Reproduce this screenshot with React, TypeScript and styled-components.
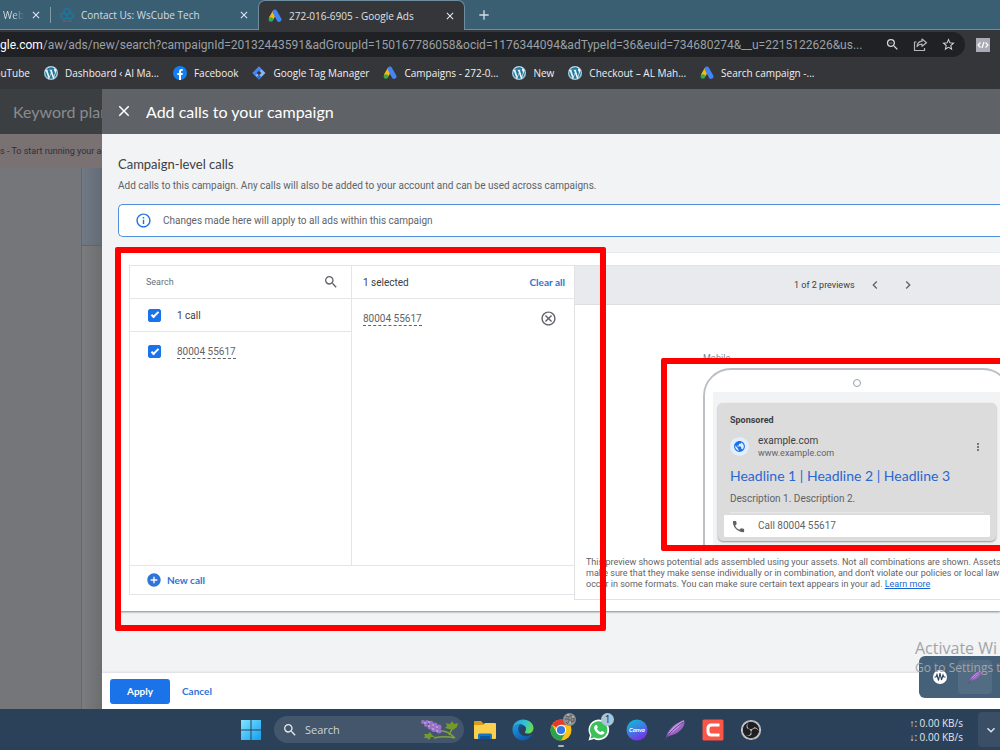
import React from "react";
import styled, { createGlobalStyle } from "styled-components";
import {
  MdAdd, MdAddCircle, MdChevronLeft, MdChevronRight, MdClose, MdExpandMore, MdMoreVert,
  MdOutlineCancel, MdOutlineInfo, MdPhone, MdPublic, MdSearch, MdStarBorder, MdZoomOut,
} from "react-icons/md";
import { FaWordpress } from "react-icons/fa";
import { SiObsstudio } from "react-icons/si";

const ui = `"Open Sans", "Noto Sans", sans-serif`;
const body = `Roboto, sans-serif`;
const display = `Lato, "Open Sans", sans-serif`;

const GlobalStyle = createGlobalStyle`
  *, *::before, *::after { box-sizing: border-box; }
  body { margin: 0; overflow: hidden; font-family: ${body}; color: #3c4043; }
  button, input { font: inherit; color: inherit; border: 0; padding: 0; margin: 0; background: none; }
  button { display: inline-flex; align-items: center; justify-content: center; cursor: pointer; }
  a { color: inherit; text-decoration: none; }
  svg { display: block; flex: none; }
  h1, h2, p { margin: 0; font-weight: 400; }
`;

const Screen = styled.div`
  position: relative;
  display: flex;
  flex-direction: column;
  height: 100vh;
  overflow: hidden;
  white-space: nowrap;
`;

/* Browser window */
const TabStrip = styled.header`
  display: flex;
  align-items: stretch;
  height: 30px;
  background: #3a5f73;
  border-bottom: 1px solid #6e8ea0;
  font: 10px ${ui};
  color: #d3dde3;
`;
const Tab = styled.div<{ $width: number; $active?: boolean }>`
  display: flex;
  align-items: center;
  gap: 7px;
  width: ${(p) => p.$width}px;
  padding: 0 8px 0 9px;
  ${(p) => p.$active && `
    background: #35363a;
    border: 1px solid #6e8ea0;
    border-bottom: 0;
    border-radius: 7px 7px 0 0;
    margin-bottom: -1px;
    color: #dfe1e4;
  `}
`;
const TabTitle = styled.span`
  flex: 1;
  overflow: hidden;
`;
const CutTab = styled(Tab)`
  padding: 0;
  gap: 6px;
`;
const CutTitle = styled.span`
  display: flex;
  justify-content: flex-end;
  width: 24px;
  overflow: hidden;
  mask-image: linear-gradient(90deg, #000 55%, transparent);
`;
const TabDivider = styled.i`
  width: 1px;
  margin: 7px 0 6px;
  background: #7f9aa8;
`;
const NewTab = styled.button`
  width: 38px;
`;
const AddressRow = styled.div`
  display: flex;
  align-items: center;
  gap: 11px;
  height: 29px;
  padding-right: 10px;
  background: #35363a;
`;
const AddressBar = styled.div`
  display: flex;
  align-items: center;
  flex: 1;
  gap: 13px;
  height: 25px;
  padding-right: 9px;
  border-radius: 0 13px 13px 0;
  background: #202124;
  color: #d5d7da;
  min-width: 0;
`;
const Url = styled.div`
  flex: 1;
  overflow: hidden;
  font: 12px ${body};
  color: #9aa0a6;
  b { font-weight: 400; color: #fff; }
`;
const Bookmarks = styled.nav`
  display: flex;
  align-items: center;
  gap: 14px;
  height: 30px;
  padding-bottom: 2px;
  background: #35363a;
  font: 10px ${ui};
  color: #f0f1f2;
`;
const Bookmark = styled.a`
  display: flex;
  align-items: center;
  gap: 7px;
`;
const CutBookmark = styled.a`
  display: flex;
  justify-content: flex-end;
  width: 30px;
  overflow: hidden;
`;

/* Page */
const Page = styled.main`
  display: flex;
  flex: 1;
  min-height: 0;
`;
const Backdrop = styled.aside`
  display: flex;
  flex-direction: column;
  width: 102px;
  flex: none;
  overflow: hidden;
  background: #747679;
`;
const BackTitle = styled.div`
  display: flex;
  align-items: center;
  height: 45px;
  background: #3c3f42;
  color: #898c8f;
  font: 16px ${display};
  &::before {
    content: "";
    width: 1px;
    height: 20px;
    margin: 0 12px 0 1px;
    background: #575a5d;
  }
`;
const BackNotice = styled.div`
  height: 34px;
  background: #7a7172;
  color: #2f3032;
  font-size: 9px;
  line-height: 34px;
`;
const BackCard = styled.div`
  flex: 1;
  margin-left: 81px;
  border-left: 1px solid #65676a;
  background: linear-gradient(90deg, #7b7c7e, #6c6d6f);
  &::before {
    content: "";
    display: block;
    height: 78px;
    background: linear-gradient(90deg, #717985, #636b77);
    border-bottom: 1px solid #5d6570;
  }
`;
const Panel = styled.section`
  display: flex;
  flex-direction: column;
  flex: 1;
  min-width: 0;
  background: #f1f3f4;
  overflow: hidden;
`;
const PanelHeader = styled.header`
  display: flex;
  align-items: center;
  gap: 13px;
  height: 45px;
  padding: 0 0 1px 13px;
  background: #5f6368;
  color: #fff;
  h1 { font: 16px ${display}; }
`;
const PanelBody = styled.div`
  flex: 1;
  min-height: 0;
  padding: 21px 0 0 16px;
`;
const SectionTitle = styled.h2`
  font: 13px/18px ${display};
  color: #3c4043;
`;
const Lead = styled.p`
  margin-top: 4px;
  font-size: 10px;
  line-height: 18px;
  color: #5f6368;
`;
const Notice = styled.div`
  display: flex;
  align-items: center;
  gap: 11px;
  height: 33px;
  margin: 9px 0 16px;
  padding: 0 0 1px 16px;
  border: 1px solid #4f8fdc;
  border-right: 0;
  border-radius: 5px 0 0 5px;
  background: #fff;
  font-size: 10px;
  color: #5f6368;
  svg { color: #1a73e8; }
`;
const Card = styled.div`
  display: flex;
  align-items: flex-start;
  padding: 12px 0 11px 11px;
  background: #fff;
  box-shadow: 0 1px 2px #80868b;
`;
const Picker = styled.div`
  width: 445px;
  flex: none;
  border: 1px solid #e3e5e8;
  border-right: 0;
`;
const Columns = styled.div`
  display: grid;
  grid-template-columns: 221px 1fr;
  height: 299px;
`;
const Column = styled.div`
  & + & { border-left: 1px solid #e3e5e8; }
`;
const Row = styled.div<{ $height: number; $line?: boolean }>`
  display: flex;
  align-items: center;
  height: ${(p) => p.$height}px;
  padding: 0 9px 0 11px;
  font-size: 10px;
  color: #3c4043;
  border-bottom: ${(p) => (p.$line ? "1px solid #e3e5e8" : "0")};
`;
const SearchField = styled.label`
  display: flex;
  align-items: center;
  flex: 1;
  padding: 0 3px 0 5px;
  color: #5f6368;
  input { flex: 1; min-width: 0; outline: 0; font-size: 9px; }
  input::placeholder { color: #6b6f74; opacity: 1; }
`;
const Check = styled.label`
  display: flex;
  align-items: center;
  gap: 16px;
  padding-left: 7px;
`;
const Tick = styled.input.attrs({ type: "checkbox" })`
  appearance: none;
  display: grid;
  place-items: center;
  width: 13px;
  height: 13px;
  border-radius: 2px;
  border: 1px solid #5f6368;
  &:checked { background: #1a73e8; border-color: #1a73e8; }
  &:checked::after {
    content: "";
    width: 4px;
    height: 8px;
    margin-bottom: 2px;
    border: solid #fff;
    border-width: 0 2px 2px 0;
    transform: rotate(45deg);
  }
`;
const Phone = styled.span`
  border-bottom: 1px dashed #5f6368;
  line-height: 13px;
  color: #5f6368;
`;
const Spacer = styled.span`
  flex: 1;
`;
const TextButton = styled.button`
  gap: 5px;
  font: 700 10px ${display};
  color: #2f74d8;
`;
const IconButton = styled.button<{ $pad?: number }>`
  color: #5f6368;
  padding: 0 ${(p) => p.$pad ?? 0}px;
`;
const PickerFooter = styled.div`
  display: flex;
  align-items: center;
  height: 29px;
  padding-left: 16px;
  border-top: 1px solid #e3e5e8;
`;
const Preview = styled.div`
  flex: 1;
  min-width: 0;
  height: 335px;
  overflow: hidden;
  border: 1px solid #e0e2e5;
  border-right: 0;
`;
const Pager = styled.div`
  display: flex;
  align-items: center;
  gap: 12px;
  height: 39px;
  padding-left: 219px;
  background: #e8eaed;
  border-bottom: 1px solid #dcdee1;
  font-size: 9px;
  color: #3c4043;
`;
const Arrows = styled.div`
  display: flex;
  gap: 17px;
`;
const Stage = styled.div`
  display: flex;
  flex-direction: column;
  width: 308px;
  height: 240px;
  margin-left: 128px;
  padding-top: 47px;
  overflow: hidden;
  font-size: 9px;
  line-height: 12px;
  color: #80868b;
`;
const Handset = styled.div`
  flex: none;
  height: 220px;
  margin-top: 4px;
  padding: 9px 8px 0;
  border: 2px solid #bdc1c6;
  border-radius: 28px 28px 0 0;
  background: #fff;
  &::before {
    content: "";
    display: block;
    width: 8px;
    height: 8px;
    margin: 0 auto 5px;
    border: 1px solid #9aa0a6;
    border-radius: 50%;
  }
`;
const HandsetScreen = styled.div`
  height: 190px;
  padding: 11px 5px;
  background: #f1f3f4;
`;
const Ad = styled.article`
  display: flex;
  flex-direction: column;
  padding: 11px 6px 4px;
  border-radius: 5px;
  background: #dcdcdc;
  box-shadow: 0 1px 2px #00000066;
  color: #5f6368;
  font-size: 10px;
`;
const AdLine = styled.div`
  padding: 0 6px;
`;
const Sponsored = styled(AdLine)`
  font-size: 9px;
  font-weight: 700;
  color: #3c4043;
`;
const Site = styled(AdLine)`
  display: flex;
  align-items: center;
  gap: 9px;
  margin-top: 8px;
  div { flex: 1; font-size: 9px; }
  strong { display: block; font: 10px/13px ${body}; color: #3c4043; }
`;
const Globe = styled.span`
  display: grid;
  place-items: center;
  width: 19px;
  height: 19px;
  border-radius: 50%;
  background: #e3edfb;
  color: #1a73e8;
`;
const Headline = styled(AdLine)`
  margin-top: 8px;
  font: 14px/18px ${display};
  color: #2a66d0;
`;
const Description = styled(AdLine)`
  margin: 8px 0 7px;
`;
const AdRule = styled.hr`
  width: 254px;
  height: 1px;
  margin: 0 6px 2px;
  border: 0;
  background: #e8e8e8;
`;
const CallLink = styled.a`
  display: flex;
  align-items: center;
  gap: 12px;
  height: 22px;
  padding-left: 7px;
  border-radius: 1px;
  background: #fff;
`;
const Disclaimer = styled.p`
  padding: 12px 0 0 11px;
  font-size: 9px;
  line-height: 11px;
  color: #5f6368;
  a { color: #1967d2; text-decoration: underline; }
`;
const PanelFooter = styled.footer`
  display: flex;
  align-items: center;
  gap: 12px;
  height: 36px;
  flex: none;
  padding-left: 8px;
  background: #fff;
  box-shadow: 0 -1px 2px #dadce0;
`;
const Apply = styled(TextButton)`
  width: 60px;
  height: 25px;
  border-radius: 3px;
  background: #1a73e8;
  color: #fff;
`;

/* Overlays */
const Highlight = styled.div<{ $x: number; $y: number; $w: number; $h: number }>`
  position: absolute;
  left: ${(p) => p.$x}px;
  top: ${(p) => p.$y}px;
  width: ${(p) => p.$w}px;
  height: ${(p) => p.$h}px;
  border: 6px solid #fe0000;
  border-radius: 2px;
  pointer-events: none;
`;
const Widget = styled.div`
  position: absolute;
  right: 0;
  bottom: 52px;
  display: flex;
  align-items: center;
  gap: 11px;
  width: 81px;
  height: 42px;
  padding-left: 14px;
  border-radius: 6px 0 0 6px;
  background: #45617a;
`;
const WidgetTile = styled.span`
  display: grid;
  place-items: center;
  width: 34px;
  height: 34px;
  border-radius: 4px;
  background: #526c83;
`;
const Watermark = styled.div`
  position: absolute;
  right: 0;
  bottom: 73px;
  width: 85px;
  font: 12px/18px ${ui};
  color: #a2a5a8;
  strong { display: block; font: 16px/22px ${ui}; }
`;

/* Taskbar */
const Taskbar = styled.footer`
  display: flex;
  align-items: center;
  height: 41px;
  flex: none;
  padding-left: 240px;
  background: #2b4059;
  color: #e4e8ec;
  font: 11px ${ui};
`;
const TaskSearch = styled.label`
  display: flex;
  align-items: center;
  gap: 7px;
  width: 190px;
  height: 27px;
  margin: 0 10px 0 12px;
  padding: 0 4px 0 8px;
  border-radius: 14px;
  background: #43566c;
  input { flex: 1; min-width: 0; outline: 0; }
  input::placeholder { color: #ccd3da; opacity: 1; }
`;
const Apps = styled.div`
  display: flex;
  gap: 16px;
`;
const AppButton = styled.button<{ $open?: boolean }>`
  position: relative;
  width: 22px;
  height: 34px;
  &::after {
    content: "";
    display: ${(p) => (p.$open ? "block" : "none")};
    position: absolute;
    bottom: 0;
    left: 8px;
    width: 6px;
    height: 2px;
    border-radius: 1px;
    background: #aab4be;
  }
`;
const Badge = styled.span<{ $bg: string }>`
  position: absolute;
  top: 0;
  right: -4px;
  width: 13px;
  height: 13px;
  border-radius: 50%;
  background: ${(p) => p.$bg};
  color: #1d2b36;
  font: 10px/13px ${ui};
  text-align: center;
`;
const Meter = styled.div`
  margin-left: auto;
  font: 10px/14px ${ui};
`;
const Tray = styled.button`
  width: 22px;
  height: 35px;
  margin-left: 15px;
  padding-left: 4px;
  border-radius: 4px 0 0 4px;
  background: #3a4e66;
`;

const AdsLogo = () => (
  <svg width="14" height="14" viewBox="0 0 24 24">
    <path d="M8 3.500 1.500 15l7 4L15 7.500Z" fill="#fbbc04" />
    <path d="M8.300 3a4 4 0 0 1 7 0l7.200 13a4 4 0 0 1-7 4L8.300 7a4 4 0 0 1 0-4Z" fill="#4285f4" />
    <circle cx="5" cy="18" r="4" fill="#34a853" />
  </svg>
);
const WordPress = () => (
  <svg width="14" height="14" viewBox="0 0 14 14">
    <circle cx="7" cy="7" r="7" fill="#e8f3f8" />
    <FaWordpress size={14} color="#21759b" />
  </svg>
);
const FacebookLogo = () => (
  <svg width="14" height="14" viewBox="0 0 14 14">
    <circle cx="7" cy="7" r="7" fill="#1180f5" />
    <path d="M6 14V9H4.300V7H6V5.600C6 3.900 7 3 8.500 3l1.300.1v1.700H9c-.8 0-1 .4-1 1V7h1.800l-.3 2H8v5Z" fill="#fff" />
  </svg>
);
const TagManager = () => (
  <svg width="14" height="14" viewBox="0 0 24 24">
    <path d="M12 1 23 12 12 23 1 12Z" fill="#8ab4f8" />
    <path d="M12 1 1 12l4.500 4.500L16.500 5.500Z" fill="#4285f4" />
    <path d="m12 8 4 4-4 4-4-4Z" fill="#35363a" />
    <path d="m12 15 4 4-4 4-4-4Z" fill="#246fdb" />
  </svg>
);
const CubeLogo = () => (
  <svg width="14" height="15" viewBox="0 0 14 15" fill="none" stroke="#147da8" strokeWidth="1.300">
    <path d="M4 3 7 1l3 2v3L7 8 4 6ZM1 7l3-1 3 2v3l-3 1-3-2ZM13 7l-3-1-3 2v3l3 1 3-2Z" />
    <path d="M2 14h10" stroke="#6c5b68" />
  </svg>
);
const ShareIcon = () => (
  <svg width="15" height="15" viewBox="0 0 15 15" fill="none" stroke="#b4b7ba" strokeWidth="1.200">
    <path d="M3.500 5H1.500v8.500h10V11M9 2l4.500 3.700L9 9.300V7.200c-2.500 0-4 .7-5 2.300.3-3 2-5 5-5.300Z" strokeLinejoin="round" />
  </svg>
);
const CodeIcon = () => (
  <svg width="14" height="14" viewBox="0 0 14 14">
    <path d="M0 0h14v14H0Z" fill="#a9acb4" />
    <path d="M4.500 4.500 2 7l2.500 2.500M9.500 4.500 12 7 9.500 9.500M8 4 6 10" fill="none" stroke="#fff" strokeWidth="1.200" />
  </svg>
);
const WindowsLogo = () => (
  <svg width="22" height="22" viewBox="0 0 22 22">
    <defs>
      <linearGradient id="win" x1="0" y1="0" x2="1" y2="1">
        <stop stopColor="#7fe6fc" /><stop offset="1" stopColor="#149df2" />
      </linearGradient>
    </defs>
    <path d="M1 1h9.500v9.500H1ZM11.500 1H21v9.500h-9.500ZM1 11.500h9.500V21H1ZM11.500 11.500H21V21h-9.500Z" fill="url(#win)" />
  </svg>
);
const Lavender = () => (
  <svg width="40" height="22" viewBox="0 0 40 22">
    <path d="M18 12c6-1 11 1 17 7M14 19c8-2 13-2 21 0M33 8l-4 8" fill="none" stroke="#7fa03c" strokeWidth="1.500" />
    <path d="M26 4l4 1 2-3 2 3 4-1-1 4-4 3-4-1-4-1 2-2ZM4 15l4 0 2-2 2 3 3 2-4 0-2 3-2-2-3 0 1-2Z" fill="#759a2b" />
    <g fill="#9a72c8">
      <circle cx="3" cy="3" r="2" /><circle cx="7" cy="3" r="2" /><circle cx="6" cy="6" r="2" />
      <circle cx="11" cy="4" r="2.300" /><circle cx="10" cy="8" r="2.500" /><circle cx="15" cy="6" r="2.500" />
      <circle cx="14" cy="10" r="3" /><circle cx="19" cy="8" r="2.500" /><circle cx="19" cy="12" r="2.500" />
    </g>
    <g fill="#c3a3e4">
      <circle cx="5" cy="4" r="1" /><circle cx="9" cy="3" r="1" /><circle cx="9" cy="7" r="1" />
      <circle cx="13" cy="6" r="1" /><circle cx="13" cy="10" r="1" /><circle cx="17" cy="8" r="1" /><circle cx="17" cy="12" r="1" />
    </g>
  </svg>
);
const Folder = () => (
  <svg width="22" height="20" viewBox="0 0 22 20">
    <path d="M0 2a1 1 0 0 1 1-1h6l3 3h11v6H0Z" fill="#dd9a16" />
    <path d="M0 5h9l2-2h10a1 1 0 0 1 1 1v14a1 1 0 0 1-1 1H1a1 1 0 0 1-1-1Z" fill="#fbd04f" />
    <path d="M4 19v-4a1.500 1.500 0 0 1 1.500-1.500h11A1.500 1.500 0 0 1 18 15v4Z" fill="#1576c4" />
    <path d="M6 16h10v3H6Z" fill="#0c559a" />
  </svg>
);
const Edge = () => (
  <svg width="22" height="22" viewBox="0 0 22 22">
    <defs>
      <linearGradient id="edge-a" x1="0" y1="0" x2="1" y2=".3">
        <stop stopColor="#2797e4" /><stop offset=".6" stopColor="#32c1d4" /><stop offset="1" stopColor="#62d95b" />
      </linearGradient>
      <linearGradient id="edge-b" x1="0" y1="0" x2=".6" y2="1">
        <stop stopColor="#1b9de2" /><stop offset="1" stopColor="#1059ad" />
      </linearGradient>
    </defs>
    <path d="M.5 10C1 4 5.500.5 11 .5c6 0 10.500 4 10.500 8.500 0 3.500-2.500 5.500-5.500 5.500-2.500 0-3.500-1-3-1.800.8-1 1-1.700 1-2.700C14 7 11 5.500 8 5.500c-4 0-6.500 2-7.500 4.500Z" fill="url(#edge-a)" />
    <path d="M.5 10C1.500 7 5 5.500 8 5.500c-1.500 2-1.700 3.500-1.500 5 .5 4.500 4.500 7.500 9 6.500 1.500-.3 2.500-.8 3.700-1.500.5-.3.900.1.600.600C18 19.500 14.500 21.500 11 21.500 5 21.500.2 16.500.5 10Z" fill="url(#edge-b)" />
    <path d="M8 5.500C11 5.500 14 7 14 10c0-1-2-3-4-2-3 1.500-3 7 1 9-3-1-4.500-4-4.500-6.500 0-1.500.3-3.200 1.500-5Z" fill="#104f96" />
  </svg>
);
const Chrome = () => (
  <svg width="22" height="22" viewBox="0 0 22 22">
    <circle cx="11" cy="11" r="10.500" fill="#fbc116" />
    <path d="M11 11 1.900 5.750A10.500 10.500 0 0 1 20.100 5.750H11Z" fill="#e33b2e" />
    <path d="M1.900 5.750A10.500 10.500 0 0 0 11 21.500l4.500-8L11 11 6.500 13.600Z" fill="#2ba24c" />
    <circle cx="11" cy="11" r="5.200" fill="#fff" />
    <circle cx="11" cy="11" r="4.100" fill="#3478e6" />
  </svg>
);
const Avatar = () => (
  <svg width="13" height="13" viewBox="0 0 13 13" fill="none" stroke="#55585b" strokeWidth="1">
    <path d="M3 3l3 1 3-2M2 6h4v4M8 5h3v3l-3 1V6M3 9l2 2" />
    <path d="M4 2h2M9 4l2 0M7 8v3" stroke="#c9cbcd" />
  </svg>
);
const WhatsApp = () => (
  <svg width="22" height="22" viewBox="0 0 22 22">
    <path d="M.5 21.500 2 16.200A10.300 10.300 0 1 1 6 20Z" fill="#fff" />
    <path d="m2.500 19.500 1-3.700A8.700 8.700 0 1 1 6.500 18.500Z" fill="#3ac159" />
    <path d="M7.600 6c.5-.5 1-.4 1.300.2l.8 1.700c.2.500-.1.900-.8 1.700 1 1.900 2 2.700 3.700 3.500.7-.7 1-1.300 1.500-1.100l2 1c.5.200.4.500.2 1.100-.4 1.200-1.700 1.900-3 1.700-3.600-.6-6.600-3.500-7.200-6.500-.2-1.300.5-2.500 1.500-3.300Z" fill="#fff" />
  </svg>
);
const Canva = () => (
  <svg width="22" height="22" viewBox="0 0 22 22">
    <defs>
      <linearGradient id="canva" x1="0" y1="0" x2=".5" y2="1">
        <stop stopColor="#08c2cf" /><stop offset=".5" stopColor="#3686e2" /><stop offset="1" stopColor="#7635e8" />
      </linearGradient>
    </defs>
    <circle cx="11" cy="11" r="10.500" fill="url(#canva)" />
    <text x="11" y="13" fontSize="6" fontStyle="italic" fontWeight="700" textAnchor="middle" fill="#fff" fontFamily="Lato, sans-serif">Canva</text>
  </svg>
);
const Feather = ({ size = 22 }: { size?: number }) => (
  <svg width={size} height={size} viewBox="0 0 22 22">
    <path d="M2 19C3 12 9 5 20 1c2 4-2 11-9 14-3 1.300-6 1.500-9 4Z" fill="#9a63c4" />
    <path d="M4 16C6 10 12 5 20 1c-3 6-8 10-16 15Z" fill="#c59be2" />
    <path d="M1 21C5 14 11 9 19 3" fill="none" stroke="#62348b" strokeWidth="1" />
  </svg>
);
const Camtasia = () => (
  <svg width="22" height="22" viewBox="0 0 22 22">
    <rect width="21" height="21" x=".5" y=".5" rx="1.500" fill="#fa5547" />
    <path d="M17.500 4.500H9A4.500 4.500 0 0 0 4.500 9v4A4.500 4.500 0 0 0 9 17.500h8.500v-3H9.500A2 2 0 0 1 7.500 12.500v-3a2 2 0 0 1 2-2h8Z" fill="#fff" />
  </svg>
);
const Obs = () => (
  <svg width="22" height="22" viewBox="0 0 22 22">
    <circle cx="11" cy="11" r="9.500" fill="#1f1f21" stroke="#c9ccd0" strokeWidth="1.200" />
    <svg x="2" y="2" width="18" height="18" viewBox="0 0 18 18"><SiObsstudio size={18} color="#d0d0d2" /></svg>
  </svg>
);
const Wave = () => (
  <svg width="14" height="14" viewBox="0 0 14 14">
    <circle cx="7" cy="7" r="7" fill="#fff" />
    <path d="M1.500 7H3l1-2.500 1.500 6L7 3l1.500 7L10 5l.8 2h1.700" fill="none" stroke="#2b4059" strokeWidth="1.100" />
  </svg>
);

const bookmarks: [React.ReactNode, string][] = [
  [<WordPress />, "Dashboard ‹ AI Ma..."],
  [<FacebookLogo />, "Facebook"],
  [<TagManager />, "Google Tag Manager"],
  [<AdsLogo />, "Campaigns - 272-0..."],
  [<WordPress />, "New"],
  [<WordPress />, "Checkout – AL Mah..."],
  [<AdsLogo />, "Search campaign -..."],
];

export default function App() {
  return (
    <Screen>
      <GlobalStyle />
      <TabStrip>
        <CutTab $width={50}>
          <CutTitle>B Web</CutTitle>
          <IconButton aria-label="Close tab"><MdClose size={12} color="#e4eaee" /></IconButton>
        </CutTab>
        <TabDivider />
        <Tab $width={207}>
          <CubeLogo />
          <TabTitle>Contact Us: WsCube Tech</TabTitle>
          <IconButton aria-label="Close tab"><MdClose size={12} color="#e4eaee" /></IconButton>
        </Tab>
        <Tab $width={207} $active>
          <AdsLogo />
          <TabTitle>272-016-6905 - Google Ads</TabTitle>
          <IconButton aria-label="Close tab"><MdClose size={12} color="#e4eaee" /></IconButton>
        </Tab>
        <NewTab aria-label="New tab"><MdAdd size={16} /></NewTab>
      </TabStrip>
      <AddressRow>
        <AddressBar>
          <Url><b>gle.com</b>/aw/ads/new/search?campaignId=20132443591&amp;adGroupId=150167786058&amp;ocid=1176344094&amp;adTypeId=36&amp;euid=734680274&amp;__u=2215122626&amp;us...</Url>
          <MdZoomOut size={15} />
          <ShareIcon />
          <MdStarBorder size={15} />
        </AddressBar>
        <CodeIcon />
      </AddressRow>
      <Bookmarks>
        <CutBookmark href="#">YouTube</CutBookmark>
        {bookmarks.map(([icon, label]) => (
          <Bookmark href="#" key={label}>{icon}{label}</Bookmark>
        ))}
      </Bookmarks>

      <Page>
        <Backdrop>
          <BackTitle>Keyword planner</BackTitle>
          <BackNotice>s - To start running your ads</BackNotice>
          <BackCard />
        </Backdrop>
        <Panel>
          <PanelHeader>
            <IconButton aria-label="Close"><MdClose size={18} color="#fff" /></IconButton>
            <h1>Add calls to your campaign</h1>
          </PanelHeader>
          <PanelBody>
            <SectionTitle>Campaign-level calls</SectionTitle>
            <Lead>Add calls to this campaign. Any calls will also be added to your account and can be used across campaigns.</Lead>
            <Notice>
              <MdOutlineInfo size={17} />
              Changes made here will apply to all ads within this campaign
            </Notice>
            <Card>
              <Picker>
                <Columns>
                  <Column>
                    <Row $height={33} $line>
                      <SearchField>
                        <input placeholder="Search" aria-label="Search calls" />
                        <MdSearch size={16} />
                      </SearchField>
                    </Row>
                    <Row $height={33} $line>
                      <Check><Tick defaultChecked />1 call</Check>
                    </Row>
                    <Row $height={39}>
                      <Check><Tick defaultChecked /><Phone>80004 55617</Phone></Check>
                    </Row>
                  </Column>
                  <Column>
                    <Row $height={33} $line>
                      1 selected
                      <Spacer />
                      <TextButton>Clear all</TextButton>
                    </Row>
                    <Row $height={39}>
                      <Phone>80004 55617</Phone>
                      <Spacer />
                      <IconButton aria-label="Remove 80004 55617" $pad={8}><MdOutlineCancel size={17} /></IconButton>
                    </Row>
                  </Column>
                </Columns>
                <PickerFooter>
                  <TextButton><MdAddCircle size={16} />New call</TextButton>
                </PickerFooter>
              </Picker>
              <Preview>
                <Pager>
                  1 of 2 previews
                  <Arrows>
                    <IconButton aria-label="Previous preview"><MdChevronLeft size={16} /></IconButton>
                    <IconButton aria-label="Next preview"><MdChevronRight size={16} /></IconButton>
                  </Arrows>
                </Pager>
                <Stage>
                  Mobile
                  <Handset>
                    <HandsetScreen>
                      <Ad>
                        <Sponsored>Sponsored</Sponsored>
                        <Site>
                          <Globe><MdPublic size={13} /></Globe>
                          <div><strong>example.com</strong>www.example.com</div>
                          <MdMoreVert size={12} />
                        </Site>
                        <Headline>Headline 1 | Headline 2 | Headline 3</Headline>
                        <Description>Description 1. Description 2.</Description>
                        <AdRule />
                        <CallLink href="#"><MdPhone size={15} />Call 80004 55617</CallLink>
                      </Ad>
                    </HandsetScreen>
                  </Handset>
                </Stage>
                <Disclaimer>
                  This preview shows potential ads assembled using your assets. Not all combinations are shown. Assets<br />
                  make sure that they make sense individually or in combination, and don't violate our policies or local law<br />
                  occur in some formats. You can make sure certain text appears in your ad. <a href="#">Learn more</a>
                </Disclaimer>
              </Preview>
            </Card>
          </PanelBody>
          <PanelFooter>
            <Apply>Apply</Apply>
            <TextButton>Cancel</TextButton>
          </PanelFooter>
        </Panel>
      </Page>

      <Taskbar>
        <AppButton aria-label="Start"><WindowsLogo /></AppButton>
        <TaskSearch>
          <MdSearch size={16} />
          <input placeholder="Search" aria-label="Search the computer" />
          <Lavender />
        </TaskSearch>
        <Apps>
          <AppButton aria-label="Files"><Folder /></AppButton>
          <AppButton aria-label="Edge"><Edge /></AppButton>
          <AppButton aria-label="Chrome" $open><Chrome /><Badge $bg="#8d8f91"><Avatar /></Badge></AppButton>
          <AppButton aria-label="WhatsApp"><WhatsApp /><Badge $bg="#a9c6d6">1</Badge></AppButton>
          <AppButton aria-label="Canva"><Canva /></AppButton>
          <AppButton aria-label="Feather"><Feather /></AppButton>
          <AppButton aria-label="Camtasia"><Camtasia /></AppButton>
          <AppButton aria-label="OBS"><Obs /></AppButton>
        </Apps>
        <Meter>↑: 0.00 KB/s<br />↓: 0.00 KB/s</Meter>
        <Tray aria-label="Show hidden icons"><MdExpandMore size={16} /></Tray>
      </Taskbar>

      <Highlight $x={115} $y={247} $w={491} $h={384} />
      <Highlight $x={661} $y={358} $w={360} $h={193} />
      <Widget><Wave /><WidgetTile><Feather size={14} /></WidgetTile></Widget>
      <Watermark><strong>Activate Wi</strong>Go to Settings t</Watermark>
    </Screen>
  );
}
